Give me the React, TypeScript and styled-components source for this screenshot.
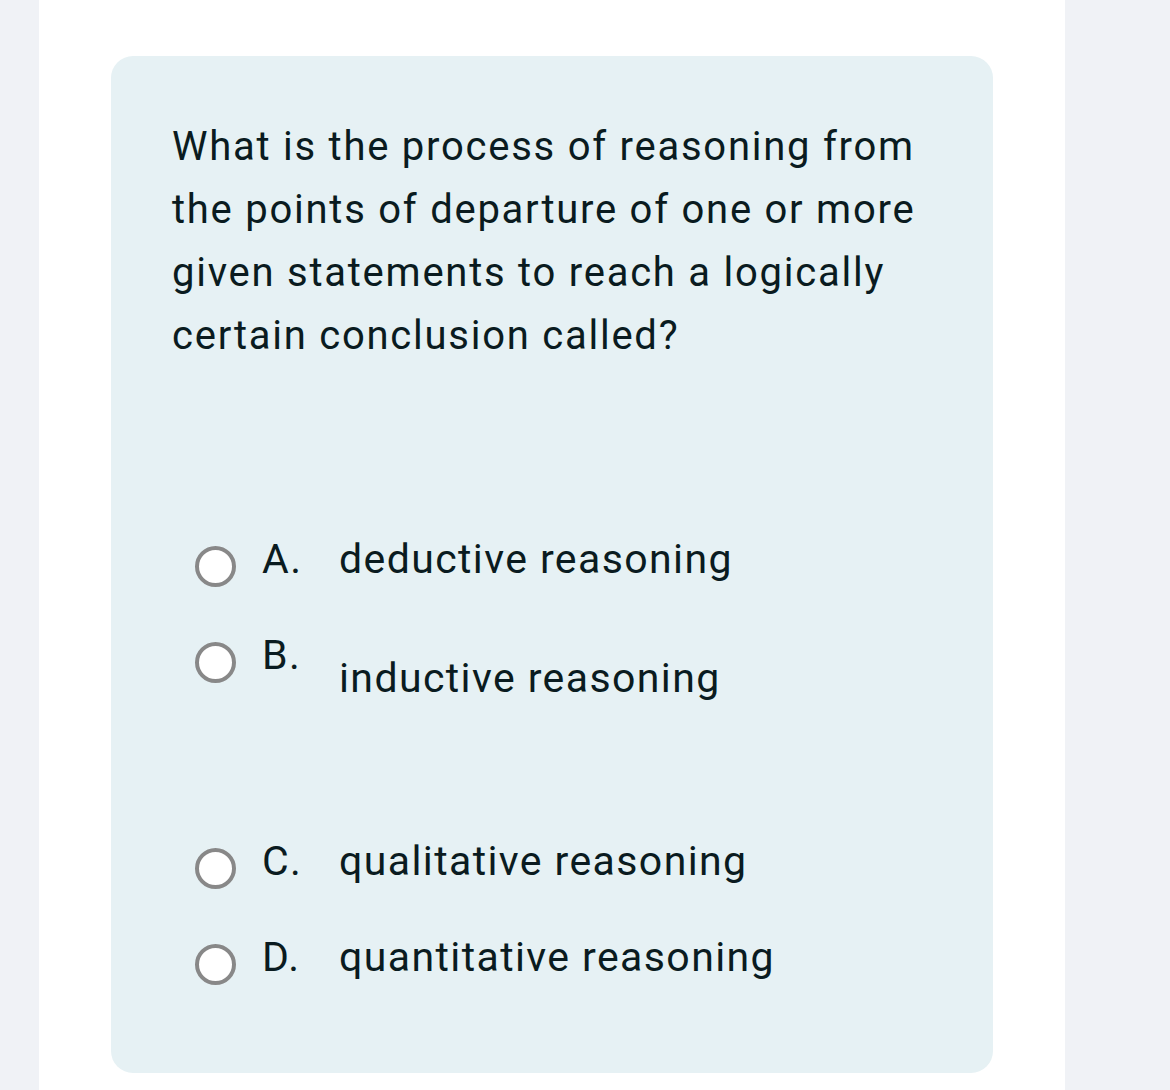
import styled, { createGlobalStyle } from 'styled-components';

const GlobalStyle = createGlobalStyle`
  html, body {
    margin: 0;
    padding: 0;
    background: #f0f2f6;
  }
  body {
    font-family: Roboto, 'Liberation Sans', sans-serif;
    color: #0a1b20;
  }
`;

interface Option {
  letter: string;
  text: string;
  spaced?: boolean;
}

const options: Option[] = [
  { letter: 'A.', text: 'deductive reasoning' },
  { letter: 'B.', text: 'inductive reasoning', spaced: true },
  { letter: 'C.', text: 'qualitative reasoning' },
  { letter: 'D.', text: 'quantitative reasoning' },
];

export default function App() {
  return (
    <>
      <GlobalStyle />
      <Page>
        <Column>
          <QuestionCard>
            <QuestionText>
              What is the process of reasoning from the points of departure of one or more given statements
              to reach a logically certain conclusion called?
            </QuestionText>
            <OptionList>
              {options.map((o) => (
                <OptionRow key={o.letter}>
                  <Radio />
                  <Letter>{o.letter}</Letter>
                  <AnswerText $spaced={o.spaced}>{o.text}</AnswerText>
                </OptionRow>
              ))}
            </OptionList>
          </QuestionCard>
        </Column>
      </Page>
    </>
  );
}

const Page = styled.div`
  display: flex;
  min-height: 1090px;
  padding-left: 39px;
`;

const Column = styled.div`
  width: 1026px;
  background: #ffffff;
  padding: 56px 0 0 72px;
  box-sizing: border-box;
`;

const QuestionCard = styled.div`
  width: 882px;
  height: 1017px;
  box-sizing: border-box;
  background: #e6f1f4;
  border-radius: 22px;
  padding: 59px 60px 0 61px;
`;

const QuestionText = styled.p`
  margin: 0;
  font-size: 40px;
  line-height: 63px;
  max-width: 761px;
  letter-spacing: 1.75px;
`;

const OptionList = styled.div`
  display: flex;
  flex-direction: column;
  gap: 44px;
  margin-top: 168px;
  padding-left: 23px;
`;

const OptionRow = styled.div`
  display: flex;
  align-items: flex-start;
  font-size: 41px;
  line-height: 48px;
  letter-spacing: 1.4px;
`;

const Radio = styled.span`
  flex: none;
  width: 41px;
  height: 41px;
  margin-top: 11px;
  box-sizing: border-box;
  border: 4px solid #888888;
  border-radius: 50%;
  background: #ffffff;
`;

const Letter = styled.span`
  flex: none;
  width: 77px;
  margin-left: 26px;
`;

const AnswerText = styled.span<{ $spaced?: boolean }>`
  padding-top: ${(p) => (p.$spaced ? '23px' : '0')};
  margin-bottom: ${(p) => (p.$spaced ? '91px' : '0')};
`;
